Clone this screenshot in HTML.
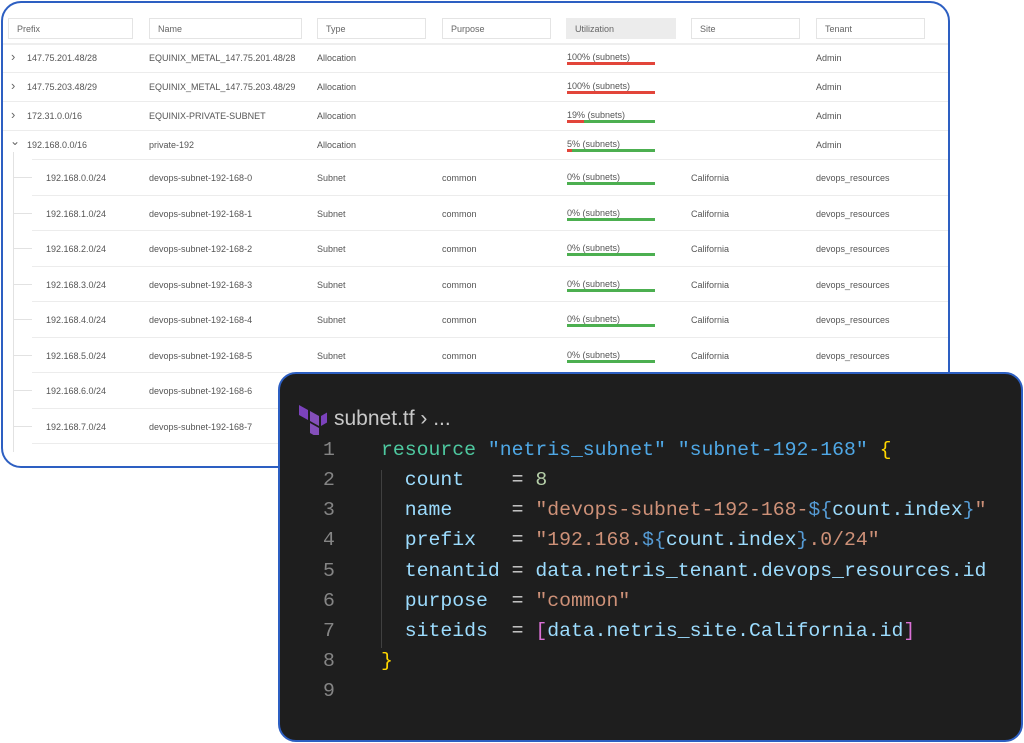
<!DOCTYPE html>
<html><head><meta charset="utf-8"><style>
*{margin:0;padding:0;box-sizing:border-box}
body{width:1024px;height:743px;background:#fff;position:relative;overflow:hidden;font-family:"Liberation Sans",Arial,sans-serif}
.card{position:absolute;left:1px;top:1px;width:949px;height:467px;border:2px solid #2d5fc2;border-radius:20px;background:#fff;overflow:hidden}
.in{position:absolute;left:-2px;top:-2px;width:949px;height:467px}
.t{position:absolute;font-size:9px;color:#555;white-space:nowrap;line-height:10px}
.hb{position:absolute;top:17px;height:21px;border:1px solid #e4e4e4;font-size:9px;color:#666;padding:5px 0 0 8px}
.sep{position:absolute;height:1px;background:#ececec;right:0}
.bar{position:absolute;height:3px;width:88px;background:#4caf50;left:565px}
.red{position:absolute;height:3px;background:#e2453a;left:0;top:0}
.chev{position:absolute;font-size:13px;color:#666;line-height:10px}
.code{position:absolute;left:278px;top:372px;width:745px;height:370px;background:#1e1e1e;border:2px solid #2d5fc2;border-radius:18px;overflow:hidden}
.ln{position:absolute;left:43px;width:20px;font-family:"Liberation Mono",monospace;font-size:19.8px;color:#858585;line-height:24px}
.cl{position:absolute;left:101px;font-family:"Liberation Mono",monospace;font-size:19.8px;color:#9cdcfe;white-space:pre;line-height:24px}
.k{color:#4ec9a0}.s{color:#4fa8e6}.o{color:#ce9178}.n{color:#b5cea8}.y{color:#ffd700}.p{color:#da70d6}.d{color:#569cd6}.w{color:#d4d4d4}
</style></head><body>
<div class="card"><div class="in">
<div class="hb" style="left:7px;width:125px">Prefix</div>
<div class="hb" style="left:148px;width:153px">Name</div>
<div class="hb" style="left:316px;width:109px">Type</div>
<div class="hb" style="left:441px;width:109px">Purpose</div>
<div class="hb" style="left:565px;width:110px;background:#ececec;border-color:#ececec">Utilization</div>
<div class="hb" style="left:690px;width:109px">Site</div>
<div class="hb" style="left:815px;width:109px">Tenant</div>
<div class="sep" style="top:42px;left:0;height:2px;background:#eee"></div>

<div class="chev" style="left:10px;top:51px">&#8250;</div>
<div class="t" style="left:26px;top:52px">147.75.201.48/28</div><div class="t" style="left:148px;top:52px">EQUINIX_METAL_147.75.201.48/28</div><div class="t" style="left:316px;top:52px">Allocation</div><div class="t" style="left:566px;top:51px">100% (subnets)</div><div class="bar" style="top:61px;left:566px;background:#e2453a"></div><div class="t" style="left:815px;top:52px">Admin</div>
<div class="sep" style="top:71px;left:0"></div>
<div class="chev" style="left:10px;top:80px">&#8250;</div>
<div class="t" style="left:26px;top:81px">147.75.203.48/29</div><div class="t" style="left:148px;top:81px">EQUINIX_METAL_147.75.203.48/29</div><div class="t" style="left:316px;top:81px">Allocation</div><div class="t" style="left:566px;top:80px">100% (subnets)</div><div class="bar" style="top:90px;left:566px;background:#e2453a"></div><div class="t" style="left:815px;top:81px">Admin</div>
<div class="sep" style="top:100px;left:0"></div>
<div class="chev" style="left:10px;top:109px">&#8250;</div>
<div class="t" style="left:26px;top:110px">172.31.0.0/16</div><div class="t" style="left:148px;top:110px">EQUINIX-PRIVATE-SUBNET</div><div class="t" style="left:316px;top:110px">Allocation</div><div class="t" style="left:566px;top:109px">19% (subnets)</div><div class="bar" style="top:119px;left:566px"><div class="red" style="width:17px"></div></div><div class="t" style="left:815px;top:110px">Admin</div>
<div class="sep" style="top:129px;left:0"></div>
<div class="chev" style="left:9px;top:135px;font-size:12px">&#8964;</div>
<div class="t" style="left:26px;top:139px">192.168.0.0/16</div><div class="t" style="left:148px;top:139px">private-192</div><div class="t" style="left:316px;top:139px">Allocation</div><div class="t" style="left:566px;top:138px">5% (subnets)</div><div class="bar" style="top:148px;left:566px"><div class="red" style="width:5px"></div></div><div class="t" style="left:815px;top:139px">Admin</div>
<div class="sep" style="top:158px;left:31px"></div>
<div style="position:absolute;left:12px;top:151px;width:1px;height:300px;background:#e2e2e2"></div>

<div class="t" style="left:45px;top:172px">192.168.0.0/24</div><div class="t" style="left:148px;top:172px">devops-subnet-192-168-0</div><div class="t" style="left:316px;top:172px">Subnet</div><div class="t" style="left:441px;top:172px">common</div><div class="t" style="left:566px;top:171px">0% (subnets)</div><div class="bar" style="top:181px;left:566px"></div><div class="t" style="left:690px;top:172px">California</div><div class="t" style="left:815px;top:172px">devops_resources</div>
<div class="sep" style="top:194px;left:31px"></div><div style="position:absolute;left:12px;top:176px;width:19px;height:1px;background:#e2e2e2"></div>
<div class="t" style="left:45px;top:208px">192.168.1.0/24</div><div class="t" style="left:148px;top:208px">devops-subnet-192-168-1</div><div class="t" style="left:316px;top:208px">Subnet</div><div class="t" style="left:441px;top:208px">common</div><div class="t" style="left:566px;top:207px">0% (subnets)</div><div class="bar" style="top:217px;left:566px"></div><div class="t" style="left:690px;top:208px">California</div><div class="t" style="left:815px;top:208px">devops_resources</div>
<div class="sep" style="top:229px;left:31px"></div><div style="position:absolute;left:12px;top:212px;width:19px;height:1px;background:#e2e2e2"></div>
<div class="t" style="left:45px;top:243px">192.168.2.0/24</div><div class="t" style="left:148px;top:243px">devops-subnet-192-168-2</div><div class="t" style="left:316px;top:243px">Subnet</div><div class="t" style="left:441px;top:243px">common</div><div class="t" style="left:566px;top:242px">0% (subnets)</div><div class="bar" style="top:252px;left:566px"></div><div class="t" style="left:690px;top:243px">California</div><div class="t" style="left:815px;top:243px">devops_resources</div>
<div class="sep" style="top:265px;left:31px"></div><div style="position:absolute;left:12px;top:247px;width:19px;height:1px;background:#e2e2e2"></div>
<div class="t" style="left:45px;top:279px">192.168.3.0/24</div><div class="t" style="left:148px;top:279px">devops-subnet-192-168-3</div><div class="t" style="left:316px;top:279px">Subnet</div><div class="t" style="left:441px;top:279px">common</div><div class="t" style="left:566px;top:278px">0% (subnets)</div><div class="bar" style="top:288px;left:566px"></div><div class="t" style="left:690px;top:279px">California</div><div class="t" style="left:815px;top:279px">devops_resources</div>
<div class="sep" style="top:300px;left:31px"></div><div style="position:absolute;left:12px;top:283px;width:19px;height:1px;background:#e2e2e2"></div>
<div class="t" style="left:45px;top:314px">192.168.4.0/24</div><div class="t" style="left:148px;top:314px">devops-subnet-192-168-4</div><div class="t" style="left:316px;top:314px">Subnet</div><div class="t" style="left:441px;top:314px">common</div><div class="t" style="left:566px;top:313px">0% (subnets)</div><div class="bar" style="top:323px;left:566px"></div><div class="t" style="left:690px;top:314px">California</div><div class="t" style="left:815px;top:314px">devops_resources</div>
<div class="sep" style="top:336px;left:31px"></div><div style="position:absolute;left:12px;top:318px;width:19px;height:1px;background:#e2e2e2"></div>
<div class="t" style="left:45px;top:350px">192.168.5.0/24</div><div class="t" style="left:148px;top:350px">devops-subnet-192-168-5</div><div class="t" style="left:316px;top:350px">Subnet</div><div class="t" style="left:441px;top:350px">common</div><div class="t" style="left:566px;top:349px">0% (subnets)</div><div class="bar" style="top:359px;left:566px"></div><div class="t" style="left:690px;top:350px">California</div><div class="t" style="left:815px;top:350px">devops_resources</div>
<div class="sep" style="top:371px;left:31px"></div><div style="position:absolute;left:12px;top:354px;width:19px;height:1px;background:#e2e2e2"></div>
<div class="t" style="left:45px;top:385px">192.168.6.0/24</div><div class="t" style="left:148px;top:385px">devops-subnet-192-168-6</div>
<div class="sep" style="top:407px;left:31px"></div><div style="position:absolute;left:12px;top:389px;width:19px;height:1px;background:#e2e2e2"></div>
<div class="t" style="left:45px;top:421px">192.168.7.0/24</div><div class="t" style="left:148px;top:421px">devops-subnet-192-168-7</div>
<div class="sep" style="top:442px;left:31px"></div><div style="position:absolute;left:12px;top:425px;width:19px;height:1px;background:#e2e2e2"></div>
</div></div>

<div class="code">
<svg style="position:absolute;left:19px;top:31px" width="28" height="30" viewBox="0 0 28 30">
<polygon points="0,0 9,5 9,15 0,10" fill="#7b42bc"/>
<polygon points="11,6 20,11 20,21 11,16" fill="#844fba"/>
<polygon points="22,11 28,7.5 28,17.5 22,21" fill="#7b42bc"/>
<polygon points="11,18 20,23 20,33 11,28" fill="#844fba"/>
</svg>
<div style="position:absolute;left:54px;top:33px;font-size:21px;color:#c8c8c8;white-space:pre">subnet.tf &#8250; ...</div>
<div style="position:absolute;left:101px;top:96px;width:1px;height:178px;background:#404040"></div>
<div class="ln" style="top:64px">1</div><div class="cl" style="top:64px"><span class="k">resource</span> <span class="s">"netris_subnet"</span> <span class="s">"subnet-192-168"</span> <span class="y">{</span></div>
<div class="ln" style="top:94px">2</div><div class="cl" style="top:94px">  count    <span class="w">=</span> <span class="n">8</span></div>
<div class="ln" style="top:124px">3</div><div class="cl" style="top:124px">  name     <span class="w">=</span> <span class="o">"devops-subnet-192-168-</span><span class="d">${</span>count.index<span class="d">}</span><span class="o">"</span></div>
<div class="ln" style="top:154px">4</div><div class="cl" style="top:154px">  prefix   <span class="w">=</span> <span class="o">"192.168.</span><span class="d">${</span>count.index<span class="d">}</span><span class="o">.0/24"</span></div>
<div class="ln" style="top:185px">5</div><div class="cl" style="top:185px">  tenantid <span class="w">=</span> data.netris_tenant.devops_resources.id</div>
<div class="ln" style="top:215px">6</div><div class="cl" style="top:215px">  purpose  <span class="w">=</span> <span class="o">"common"</span></div>
<div class="ln" style="top:245px">7</div><div class="cl" style="top:245px">  siteids  <span class="w">=</span> <span class="p">[</span>data.netris_site.California.id<span class="p">]</span></div>
<div class="ln" style="top:275px">8</div><div class="cl" style="top:275px"><span class="y">}</span></div>
<div class="ln" style="top:305px">9</div>
</div>
</body></html>
